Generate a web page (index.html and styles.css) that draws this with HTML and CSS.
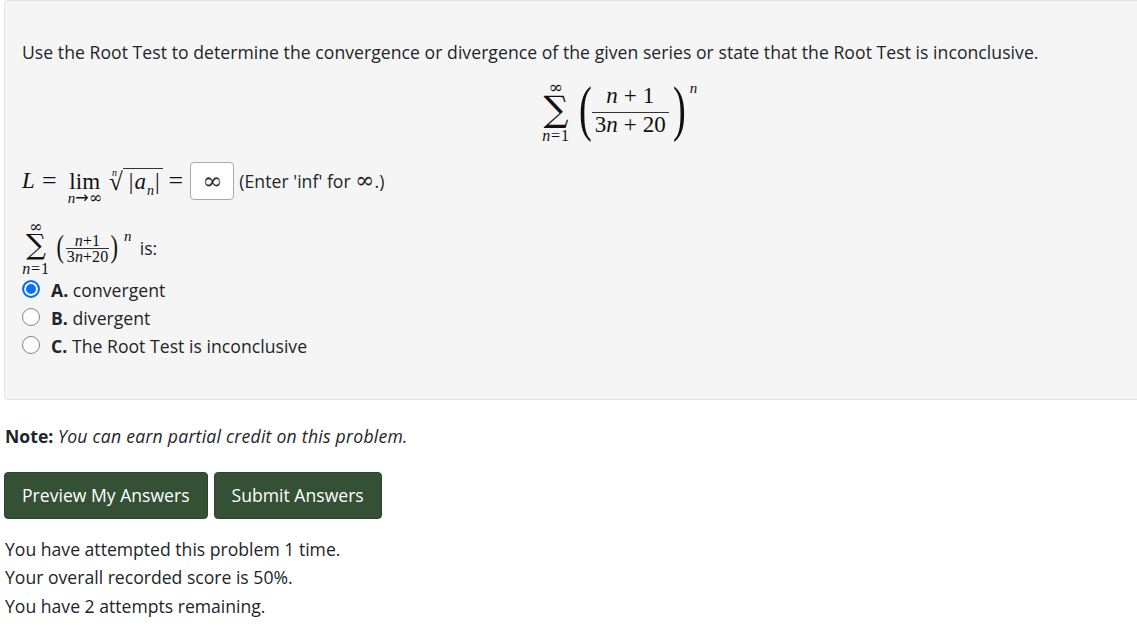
FILE: index.html
```html
<!DOCTYPE html>
<html lang="en">
<head>
<meta charset="utf-8">
<title>Root Test problem</title>
<link rel="stylesheet" href="styles.css">
</head>
<body>
<main class="page">
  <section class="card">
    <p class="prompt">Use the Root Test to determine the convergence or divergence of the given series or state that the Root Test is inconclusive.</p>
    <div class="display-math math">
      <span class="bigop">
        <span class="lim-top inf">∞</span>
        <span class="sigma">∑</span>
        <span class="lim-bot"><i>n</i>=1</span>
      </span>
      <span class="paren paren-big paren-open">(</span>
      <span class="frac">
        <span class="num"><i>n</i> + 1</span>
        <span class="den">3<i>n</i> + 20</span>
      </span>
      <span class="paren paren-big">)</span>
      <sup class="exp"><i>n</i></sup>
    </div>
    <div class="limit-row">
      <span class="math limit-math">
        <i class="big-l">L</i><span class="eq">=</span>
        <span class="lim"><span>lim</span><span class="lim-sub"><i>n</i><span class="arrow">→</span><span class="inf">∞</span></span></span>
        <span class="root"><sup class="root-index"><i>n</i></sup><span class="radical">√</span><span class="radicand">|<i>a</i><sub><i>n</i></sub>|</span></span>
        <span class="eq eq-last">=</span>
      </span>
      <span class="answer-box">∞</span>
      <span class="hint">(Enter 'inf' for <span class="hint-inf">∞</span>.)</span>
    </div>
    <div class="series-row">
      <span class="math series-math">
        <span class="bigop bigop-small">
          <span class="lim-top inf">∞</span>
          <span class="sigma">∑</span>
          <span class="lim-bot"><i>n</i>=1</span>
        </span>
        <span class="paren paren-small">(</span>
        <span class="frac frac-small">
          <span class="num"><i>n</i>+1</span>
          <span class="den">3<i>n</i>+20</span>
        </span>
        <span class="paren paren-small">)</span>
        <sup class="exp exp-small"><i>n</i></sup>
      </span>
      <span class="is-label">is:</span>
    </div>
    <ul class="options">
      <li class="option"><span class="radio radio-on"></span><span class="option-text"><b>A.</b> convergent</span></li>
      <li class="option"><span class="radio"></span><span class="option-text"><b>B.</b> divergent</span></li>
      <li class="option"><span class="radio"></span><span class="option-text"><b>C.</b> The Root Test is inconclusive</span></li>
    </ul>
  </section>
  <p class="note"><b>Note:</b> <em>You can earn partial credit on this problem.</em></p>
  <div class="buttons">
    <button class="btn" type="button">Preview My Answers</button>
    <button class="btn" type="button">Submit Answers</button>
  </div>
  <div class="status">
    <p>You have attempted this problem 1 time.</p>
    <p>Your overall recorded score is 50%.</p>
    <p>You have 2 attempts remaining.</p>
  </div>
</main>
</body>
</html>
```
FILE: styles.css
```css
* { box-sizing: border-box; }
html, body { margin: 0; padding: 0; height: 630px; overflow: hidden; background: #fff; }
body { font-family: "Open Sans", "Noto Sans", sans-serif; font-size: 17.6px; color: #212529; letter-spacing: 0.035px; }
.page { padding-left: 4px; }
.card {
  height: 400px;
  background: #f5f5f5;
  border: 1px solid #e3e3e3;
  border-right: 0;
  border-radius: 4px 0 0 4px;
  padding: 39px 0 0 17px;
}
.prompt { margin: 0; line-height: 24px; height: 24px; white-space: nowrap; letter-spacing: 0.045px; }
.math { font-family: "Liberation Serif", "DejaVu Serif", serif; color: #111; letter-spacing: 0.1px; }
.inf { font-family: "DejaVu Serif", serif; letter-spacing: 0; }
.display-math { display: flex; justify-content: flex-start; align-items: center; height: 78px; margin-top: 9px; padding-left: 519px; font-size: 23px; }
.bigop { display: inline-flex; flex-direction: column; align-items: center; width: 30px; flex: none; }
.lim-top, .lim-bot { font-size: 16px; line-height: 14px; white-space: nowrap; letter-spacing: 0.8px; }
.lim-bot { margin-top: 3px; }
.lim-top.inf { font-size: 17px; line-height: 11px; }
.sigma { font-family: "DejaVu Serif", serif; font-size: 35px; line-height: 33px; letter-spacing: 0; }
.paren { font-weight: 400; line-height: 1; }
.paren-big { font-size: 62px; transform: scaleX(0.62); position: relative; top: -4px; margin-right: 0; }
.paren-open { margin: 0 -4px 0 4px; }
.frac { display: inline-flex; flex-direction: column; align-items: center; text-align: center; }
.num { padding: 0 3px 3px; line-height: 27px; }
.den { padding: 1px 3px 6px; line-height: 22px; border-top: 1px solid #333; }
.exp { font-size: 15px; align-self: flex-start; line-height: 1; margin-top: 8px; margin-left: 0; }
.limit-row { display: flex; align-items: center; height: 38px; margin-top: 11px; }
.limit-math { display: inline-flex; align-items: center; font-size: 23px; }
.big-l { margin-right: 5px; }
.eq { margin: 0 11px 0 2px; font-size: 26px; }
.lim { display: inline-flex; flex-direction: column; align-items: center; line-height: 22px; position: relative; top: 7px; }
.lim-sub { font-size: 15px; line-height: 13px; white-space: nowrap; margin-top: -2px; }
.lim-sub .inf { font-size: 16px; }
.arrow { font-family: "DejaVu Sans", sans-serif; font-size: 16px; line-height: 0; letter-spacing: 0; }
.root { display: inline-flex; align-items: flex-start; margin-left: 7px; position: relative; }
.root-index { font-size: 10px; position: absolute; left: 3px; top: 0; line-height: 1; margin: 0; }
.radical { font-size: 25px; line-height: 26px; margin-top: 1px; }
.radicand { border-top: 1px solid #333; line-height: 25px; padding: 0 2px 0 6px; letter-spacing: 1px; }
.radicand sub { font-size: 14px; line-height: 0; }
.eq-last { margin: 0 7px 0 6px; }
.answer-box {
  width: 44px; height: 38px; flex: none;
  background: #fff; border: 1px solid #aaa; border-radius: 4px;
  display: inline-flex; align-items: center; justify-content: center;
  font-family: "DejaVu Serif", serif; font-size: 24px; color: #333;
  margin-right: 5px;
}
.hint-inf { font-size: 23px; font-family: "DejaVu Serif", serif; line-height: 1; }
.series-row { display: flex; align-items: center; height: 52px; margin-top: 22px; }
.series-math { display: inline-flex; align-items: center; font-size: 16px; }
.bigop-small { width: 28px; }
.bigop-small .sigma { font-size: 28px; line-height: 25px; }
.bigop-small .lim-top.inf { font-size: 16px; line-height: 11px; }
.bigop-small .lim-bot { font-size: 16px; line-height: 15px; margin-top: 4px; }
.paren-small { font-size: 32px; margin: 0 0 0 5px; transform: scaleX(0.7); position: relative; top: -2px; }
.paren-small + .frac + .paren-small { margin: 0; }
.frac-small .num { line-height: 15px; padding: 0 1px; }
.frac-small .den { line-height: 15px; padding: 0 1px; }
.exp-small { margin-top: 8px; margin-left: 4px; }
.is-label { margin-left: 8px; }
.options { list-style: none; margin: 1px 0 0; padding: 0; }
.option { display: flex; align-items: center; height: 28px; gap: 11px; }
.option-text { position: relative; top: 1px; }
.options b { font-weight: 700; }
.radio {
  width: 18px; height: 18px; border-radius: 50%;
  background: #fff; border: 1px solid #858585; flex: none;
}
.radio-on { border: 2px solid #0d6efd; background: #0d6efd; box-shadow: inset 0 0 0 2px #fff; }
.note { margin: 24px 0 0 1px; line-height: 24px; }
.note em { letter-spacing: 0.25px; }
.buttons { display: flex; gap: 6px; margin-top: 24px; }
.btn {
  height: 47px; padding: 0 17px 2px;
  background: #345035; color: #fff; border: 1px solid #2c452d; border-radius: 4px;
  font: inherit; letter-spacing: 0;
}
.status { margin: 16px 0 0 1px; }
.status p { margin: 0; line-height: 28.4px; letter-spacing: 0; }
```
